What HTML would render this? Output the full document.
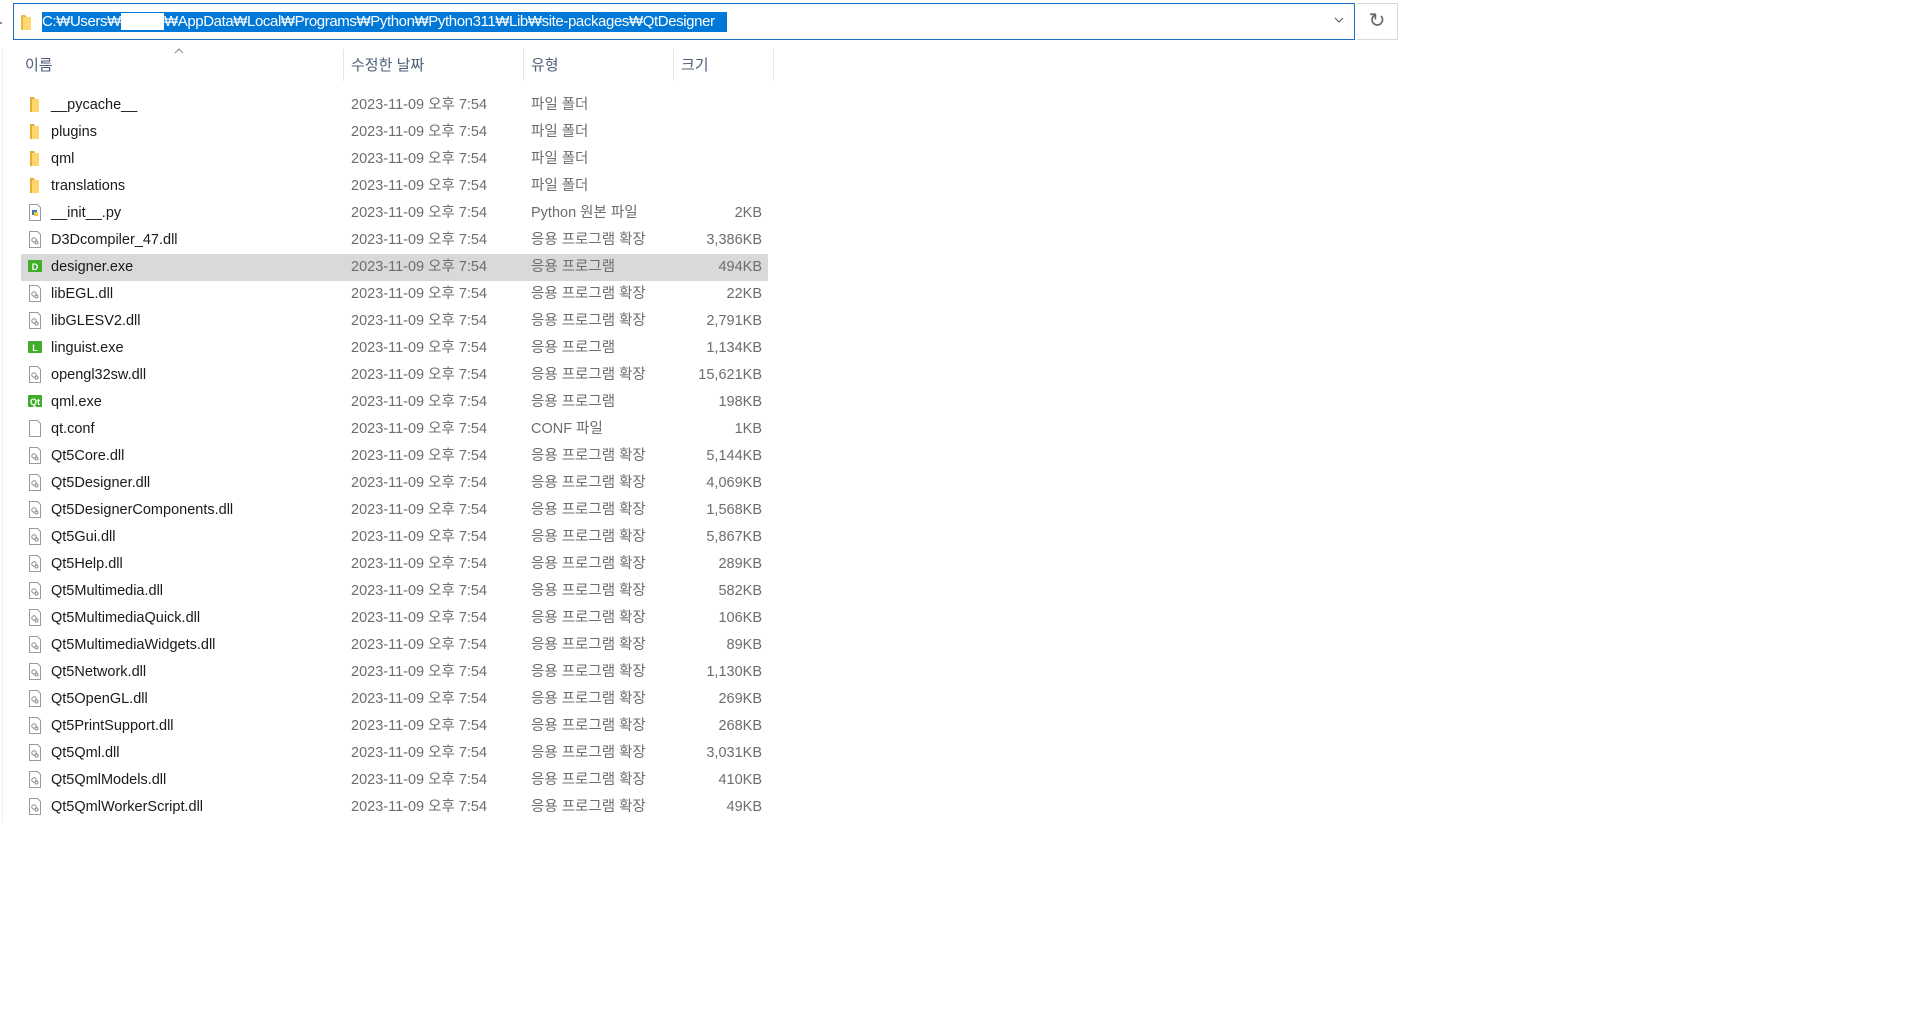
<!DOCTYPE html>
<html><head><meta charset="utf-8">
<style>
html,body{margin:0;padding:0;background:#fff;width:1922px;height:1030px;overflow:hidden;position:relative;font-family:"Liberation Sans","Noto Sans CJK KR",sans-serif;}
.addr{position:absolute;left:13px;top:3px;width:1342px;height:37px;border:1px solid #1e6fc8;box-sizing:border-box;}
.sel{position:absolute;left:42px;top:12px;height:20px;width:685px;background:#0078d7;color:#fff;font-size:15px;line-height:20px;white-space:nowrap;overflow:hidden;letter-spacing:-0.4px}
.refresh{position:absolute;left:1357px;top:3px;width:41px;height:37px;border:1px solid #d9d9d9;border-left:none;box-sizing:border-box;color:#666;font-size:20px;text-align:center;line-height:35px}
.hdr{position:absolute;top:54px;font-size:15px;color:#4c5e78}
.div{position:absolute;top:49px;height:32px;width:1px;background:#e5e5e5}
.row{position:absolute;left:21px;width:747px;height:27px;font-size:14.5px;line-height:27px}
.row.s{background:#d9d9d9}
.n{position:absolute;left:30px;color:#1a1a1a;white-space:nowrap}
.d{position:absolute;left:330px;color:#6d6d6d;white-space:nowrap}
.t{position:absolute;left:510px;color:#6d6d6d;white-space:nowrap}
.z{position:absolute;right:6px;color:#6d6d6d}
.ic{position:absolute;left:7px;top:4px;width:14px;height:17px}
</style></head><body>
<div style="position:absolute;left:2px;top:48px;width:1px;height:775px;background:#eee"></div>
<div style="position:absolute;left:0;top:22px;width:2px;height:2px;background:#888"></div>
<div class="addr"></div>
<svg style="position:absolute;left:20px;top:13px" width="12" height="18"><path d="M1 2h4l2 2v13H1z" fill="#e8b84a"/><path d="M3 4h8v13H3z" fill="#ffd970"/></svg>
<div class="sel">C:₩Users₩<span style="background:#fff;color:#fff">user1&nbsp;&nbsp;</span>₩AppData₩Local₩Programs₩Python₩Python311₩Lib₩site-packages₩QtDesigner</div>
<svg style="position:absolute;left:1334px;top:17px" width="10" height="8"><path d="M1 1l4 4 4-4" stroke="#555" fill="none"/></svg>
<div class="refresh">↻</div>
<svg style="position:absolute;left:174px;top:48px" width="10" height="6"><path d="M1 5l4-4 4 4" stroke="#888" fill="none"/></svg>
<div class="hdr" style="left:25px">이름</div>
<div class="hdr" style="left:351px">수정한 날짜</div>
<div class="hdr" style="left:531px">유형</div>
<div class="hdr" style="left:681px">크기</div>
<div class="div" style="left:343px"></div><div class="div" style="left:523px"></div><div class="div" style="left:673px"></div><div class="div" style="left:773px"></div>
<div id="rows"></div>
<script>
var F=[["__pycache__","f","파일 폴더",""],["plugins","f","파일 폴더",""],["qml","f","파일 폴더",""],["translations","f","파일 폴더",""],["__init__.py","p","Python 원본 파일","2KB"],["D3Dcompiler_47.dll","d","응용 프로그램 확장","3,386KB"],["designer.exe","D","응용 프로그램","494KB"],["libEGL.dll","d","응용 프로그램 확장","22KB"],["libGLESV2.dll","d","응용 프로그램 확장","2,791KB"],["linguist.exe","L","응용 프로그램","1,134KB"],["opengl32sw.dll","d","응용 프로그램 확장","15,621KB"],["qml.exe","Q","응용 프로그램","198KB"],["qt.conf","c","CONF 파일","1KB"],["Qt5Core.dll","d","응용 프로그램 확장","5,144KB"],["Qt5Designer.dll","d","응용 프로그램 확장","4,069KB"],["Qt5DesignerComponents.dll","d","응용 프로그램 확장","1,568KB"],["Qt5Gui.dll","d","응용 프로그램 확장","5,867KB"],["Qt5Help.dll","d","응용 프로그램 확장","289KB"],["Qt5Multimedia.dll","d","응용 프로그램 확장","582KB"],["Qt5MultimediaQuick.dll","d","응용 프로그램 확장","106KB"],["Qt5MultimediaWidgets.dll","d","응용 프로그램 확장","89KB"],["Qt5Network.dll","d","응용 프로그램 확장","1,130KB"],["Qt5OpenGL.dll","d","응용 프로그램 확장","269KB"],["Qt5PrintSupport.dll","d","응용 프로그램 확장","268KB"],["Qt5Qml.dll","d","응용 프로그램 확장","3,031KB"],["Qt5QmlModels.dll","d","응용 프로그램 확장","410KB"],["Qt5QmlWorkerScript.dll","d","응용 프로그램 확장","49KB"]];
var h="";
F.forEach(function(r,i){
 var ic;
 if(r[1]=="f")ic='<svg class="ic" viewBox="0 0 14 17"><path d="M2 1h4l1 2v13H2z" fill="#e3ad3c"/><path d="M4 3h7v13H4z" fill="#ffd66b"/></svg>';
 else if(r[1]=="D"||r[1]=="L"||r[1]=="Q")ic='<svg class="ic" viewBox="0 0 14 17"><rect x="0" y="2" width="14" height="12" rx="1" fill="#3fae2a"/><text x="7" y="12" font-size="9" fill="#fff" text-anchor="middle" font-family="Liberation Sans" font-weight="bold">'+(r[1]=="Q"?"Qt":r[1])+'</text></svg>';
 else ic='<svg class="ic" viewBox="0 0 14 17"><path d="M1.5 .5h8l3 3v13h-11z" fill="#fff" stroke="#9a9a9a"/>'+(r[1]=="d"?'<circle cx="6" cy="9" r="2.2" fill="none" stroke="#8a8a8a"/><circle cx="8.5" cy="11.5" r="1.5" fill="none" stroke="#8a8a8a"/>':r[1]=="p"?'<rect x="4" y="6" width="5" height="5" fill="#3d79b0"/><rect x="6" y="8" width="4" height="4" fill="#f2c843"/>':'')+'</svg>';
 h+='<div class="row'+(i==6?' s':'')+'" style="top:'+(92+i*27)+'px">'+ic+'<span class="n">'+r[0]+'</span><span class="d">2023-11-09 오후 7:54</span><span class="t">'+r[2]+'</span><span class="z">'+r[3]+'</span></div>';
});
document.getElementById("rows").innerHTML=h;
</script>
</body></html>
